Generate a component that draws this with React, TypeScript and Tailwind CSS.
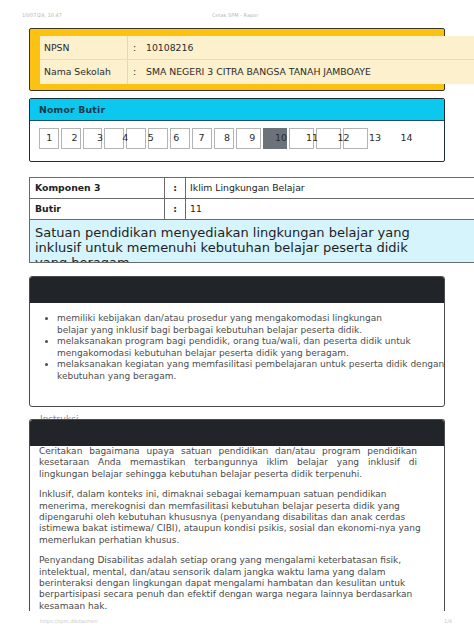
import React from 'react';

const boxes = [
  { w: 'w-[20px]', dark: false },
  { w: 'w-[20px]', dark: false },
  { w: 'w-[19px]', dark: false },
  { w: 'w-[20px]', dark: false },
  { w: 'w-[20px]', dark: false },
  { w: 'w-[20px]', dark: false },
  { w: 'w-[20px]', dark: false },
  { w: 'w-[20px]', dark: false },
  { w: 'w-[20px]', dark: false },
  { w: 'w-[25px]', dark: false },
  { w: 'w-[24px]', dark: true },
  { w: 'w-[25px]', dark: false },
  { w: 'w-[25px]', dark: false },
  { w: 'w-[25px]', dark: false },
];

const numbers = [
  { n: '1', w: 'w-[25.4px]' },
  { n: '2', w: 'w-[25.4px]' },
  { n: '3', w: 'w-[25.4px]' },
  { n: '4', w: 'w-[25.4px]' },
  { n: '5', w: 'w-[25.4px]' },
  { n: '6', w: 'w-[25.4px]' },
  { n: '7', w: 'w-[25.4px]' },
  { n: '8', w: 'w-[25.4px]' },
  { n: '9', w: 'w-[25.4px]' },
  { n: '10', w: 'w-[32px]' },
  { n: '11', w: 'w-[30px]' },
  { n: '12', w: 'w-[33px]' },
  { n: '13', w: 'w-[30px]' },
  { n: '14', w: 'w-[33px]' },
];

function SchoolCard() {
  return (
    <div className="ml-[29px] w-[416px] h-[63px] border border-[#3b3520] rounded-[2px] bg-[#fbc212] pt-[7px] pl-[10px]">
      <div className="w-[434px] bg-[#fdf0cc] text-[9.3px] text-[#2b2b2b]">
        <div className="flex h-[24px] items-center border-b border-[#ecdcae]">
          <div className="w-[88px] h-full flex items-center pl-[4px] border-r border-[#e8d8ac]">NPSN</div>
          <div className="w-[13px] text-center">:</div>
          <div className="pl-[5px]">10108216</div>
        </div>
        <div className="flex h-[24px] items-center">
          <div className="w-[88px] h-full flex items-center pl-[4px] border-r border-[#e8d8ac]">Nama Sekolah</div>
          <div className="w-[13px] text-center">:</div>
          <div className="pl-[5px]">SMA NEGERI 3 CITRA BANGSA TANAH JAMBOAYE</div>
        </div>
      </div>
    </div>
  );
}

function NomorButir() {
  return (
    <div className="ml-[29px] mt-[7px] w-[416px] h-[64px] border border-[#1e2e36] rounded-[2px] bg-white">
      <div className="h-[22px] bg-[#0cc8ee] border-b border-[#1b5166] flex items-center pl-[9px] text-[9.3px] font-bold tracking-[0.2px] text-[#133a4c]">
        Nomor Butir
      </div>
      <div className="pt-[7px] pl-[9px]">
        <div className="relative h-[21px]">
          <div className="flex gap-[2px] h-full">
            {boxes.map((b, i) => (
              <div
                key={i}
                className={`${b.w} h-full border ${b.dark ? 'bg-[#6b727a] border-[#6b727a]' : 'bg-white border-[#b4b4b4]'}`}
              />
            ))}
          </div>
          <div className="absolute inset-0 -left-[2.5px] flex items-center text-[9.5px] text-[#2b2b2b]">
            {numbers.map((x) => (
              <span key={x.n} className={`${x.w} text-center`}>
                {x.n}
              </span>
            ))}
          </div>
        </div>
      </div>
    </div>
  );
}

function KomponenTable() {
  return (
    <div className="ml-[29px] mt-[15px] w-[446px] border-t border-l border-[#6a6a6a] text-[9.3px] text-[#222]">
      <div className="flex h-[21px] items-center border-b border-[#6a6a6a]">
        <div className="w-[134px] pl-[5px] font-bold">Komponen 3</div>
        <div className="w-[22px] h-full flex items-center justify-center border-l border-r border-[#6a6a6a] font-bold">:</div>
        <div className="pl-[4px]">Iklim Lingkungan Belajar</div>
      </div>
      <div className="flex h-[21px] items-center border-b border-[#6a6a6a]">
        <div className="w-[134px] pl-[5px] font-bold">Butir</div>
        <div className="w-[22px] h-full flex items-center justify-center border-l border-r border-[#6a6a6a] font-bold">:</div>
        <div className="pl-[4px]">11</div>
      </div>
      <div className="h-[43px] overflow-hidden bg-[#d6f4fb] border-b border-[#6a6a6a] pl-[5px] pt-[5px]">
        <p className="w-[400px] text-[13px] leading-[15px] text-[#1e1e1e]">
          Satuan pendidikan menyediakan lingkungan belajar yang inklusif untuk memenuhi kebutuhan belajar peserta didik yang beragam
        </p>
      </div>
    </div>
  );
}

function IndikatorCard() {
  return (
    <div className="ml-[29px] mt-[13px] w-[416px] h-[131px] border border-[#4a4a4a] rounded-[3px] bg-white">
      <div className="h-[26px] bg-[#212529] rounded-t-[2px]" />
      <ul className="w-[427px] list-disc pl-[27px] pt-[10px] text-[9px] leading-[11.6px] text-[#4d4d4d]">
        <li>
          memiliki kebijakan dan/atau prosedur yang mengakomodasi lingkungan
          <br />
          belajar yang inklusif bagi berbagai kebutuhan belajar peserta didik.
        </li>
        <li>
          melaksanakan program bagi pendidik, orang tua/wali, dan peserta didik untuk mengakomodasi  kebutuhan belajar peserta didik yang beragam.
        </li>
        <li>
          melaksanakan kegiatan yang memfasilitasi pembelajaran untuk peserta didik dengan kebutuhan yang beragam.
        </li>
      </ul>
    </div>
  );
}

function InstruksiCard() {
  return (
    <div>
      <div className="ml-[40px] h-[12px] overflow-hidden">
        <div className="pt-[8px] text-[9px] leading-[9px] text-[#888]">Instruksi</div>
      </div>
      <div className="ml-[29px] w-[416px] h-[192px] overflow-hidden border-t border-l border-r border-[#4a4a4a] rounded-t-[3px] bg-white">
        <div className="h-[26px] bg-[#212529] rounded-t-[2px]" />
        <div className="pl-[9px] text-[9px] leading-[11.4px] text-[#4a4a4a]">
          <p className="w-[378px] text-justify">
            Ceritakan bagaimana upaya satuan pendidikan dan/atau program pendidikan kesetaraan Anda memastikan terbangunnya iklim belajar yang inklusif di lingkungan belajar sehingga kebutuhan belajar peserta didik terpenuhi.
          </p>
          <p className="w-[396px] mt-[9px]">
            Inklusif, dalam konteks ini, dimaknai sebagai kemampuan satuan pendidikan menerima, merekognisi dan memfasilitasi kebutuhan belajar peserta didik yang dipengaruhi oleh kebutuhan khususnya (penyandang disabilitas dan anak cerdas istimewa bakat istimewa/ CIBI), ataupun kondisi psikis, sosial dan ekonomi-nya yang memerlukan perhatian khusus.
          </p>
          <p className="w-[396px] mt-[9px]">
            Penyandang Disabilitas adalah setiap orang yang mengalami keterbatasan fisik, intelektual, mental, dan/atau sensorik dalam jangka waktu lama yang dalam berinteraksi dengan lingkungan dapat mengalami hambatan dan kesulitan untuk berpartisipasi secara penuh dan efektif dengan warga negara lainnya berdasarkan kesamaan hak.
          </p>
        </div>
      </div>
    </div>
  );
}

export default function App() {
  return (
    <div className="w-[474px] h-[632px] overflow-hidden bg-white font-['DejaVu_Sans',sans-serif]">
      {/* faint print header */}
      <div className="h-[28px] flex items-start pt-[12px] text-[5px] text-[#b5b5b5]">
        <span className="ml-[22px]">10/07/24, 10.47</span>
        <span className="ml-[150px]">Cetak SPM - Rapor</span>
      </div>
      <SchoolCard />
      <NomorButir />
      <KomponenTable />
      <IndikatorCard />
      <InstruksiCard />
      <div className="flex items-center h-[22px] text-[5px] text-[#c8c8c8]">
        <span className="ml-[40px]">https://spm.dikdasmen</span>
        <span className="ml-auto mr-[22px]">1/4</span>
      </div>
    </div>
  );
}
